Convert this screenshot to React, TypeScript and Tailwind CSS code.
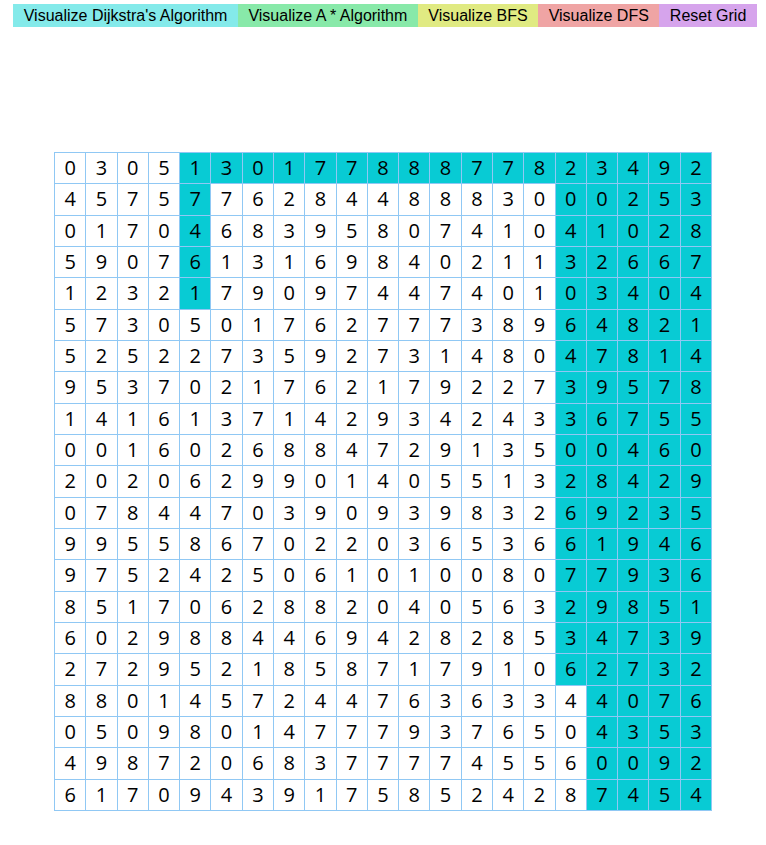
import React from 'react';

// 21 x 21 grid of weights, row by row
const rows: string[] = [
  '030513017788877823492',
  '457577628448883000253',
  '017046839580741041028',
  '590761316984021132667',
  '123217909744740103404',
  '573050176277738964821',
  '525227359273148047814',
  '953702176217922739578',
  '141613714293424336755',
  '001602688472913500460',
  '202062990140551328429',
  '078447039093983269235',
  '995586702203653661946',
  '975242506101008077936',
  '851706288204056329851',
  '602988446942828534739',
  '272952185871791062732',
  '880145724476363344076',
  '050980147779376504353',
  '498720683777745560092',
  '617094391758524287454',
];

// cells lit by the visualizer
const isVisited = (r: number, c: number) => {
  if (r === 0) return c >= 4;
  if (r <= 4 && c === 4) return true;
  if (r <= 16) return c >= 16;
  return c >= 17;
};

const buttons = [
  { label: "Visualize Dijkstra's Algorithm", bg: 'bg-[#84eaea]' },
  { label: 'Visualize A * Algorithm', bg: 'bg-[#88e9a9]' },
  { label: 'Visualize BFS', bg: 'bg-[#e0ea82]' },
  { label: 'Visualize DFS', bg: 'bg-[#efa4a4]' },
  { label: 'Reset Grid', bg: 'bg-[#d6a4ec]' },
];

export default function App() {
  return (
    <div className="min-h-screen bg-white">
      {/* Toolbar */}
      <div className="flex justify-center pt-[4px] pl-[4px]">
        {buttons.map(b => (
          <button
            key={b.label}
            className={`${b.bg} px-[10.5px] py-[2px] text-[16px] leading-[19px] text-black font-['Liberation_Sans',Arial,sans-serif]`}
          >
            {b.label}
          </button>
        ))}
      </div>

      {/* Grid */}
      <div className="mt-[125px] mx-auto w-[658px] grid grid-cols-[repeat(21,minmax(0,1fr))] border-l border-t border-[#90c8f4] font-['Open_Sans','Noto_Sans',sans-serif] text-[20px] text-black">
        {rows.map((row, r) =>
          row.split('').map((d, c) => (
            <div
              key={`${r}-${c}`}
              className={`h-[31.33px] flex items-center justify-center border-r border-b border-[#90c8f4] ${
                isVisited(r, c) ? 'bg-[#08cbd4]' : 'bg-white'
              }`}
            >
              {d}
            </div>
          ))
        )}
      </div>
    </div>
  );
}
